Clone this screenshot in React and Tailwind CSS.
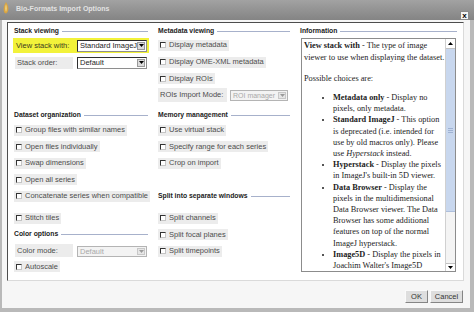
import React from 'react'

const Heading = ({ children, className = '' }) => (
  <div className={`flex items-center gap-[3px] h-[10px] ${className}`}>
    <span className="text-[6.8px] font-bold text-[#222] whitespace-nowrap leading-none">{children}</span>
    <span className="flex-1 h-px bg-[#a7b1cb]" />
  </div>
)

const Check = ({ label, className = '' }) => (
  <div className={`flex items-center self-start h-[11px] bg-[#ececec] pl-[2px] pr-[2px] gap-[3px] ${className}`}>
    <span className="w-[6px] h-[6px] bg-white border border-t-[#333] border-l-[#333] border-r-[#c4c4c4] border-b-[#c4c4c4]" />
    <span className="text-[7.5px] text-[#4d4d4d] leading-none whitespace-nowrap">{label}</span>
  </div>
)

const Select = ({ value, disabled, className = '', textSize = 'text-[7.5px]' }) => (
  <div
    className={`flex items-stretch border ${
      disabled
        ? 'border-[#b4b4b4] bg-[#f3f3f3]'
        : 'border-t-[#2e2e2e] border-l-[#2e2e2e] border-r-[#8e8e8e] border-b-[#8e8e8e] bg-white'
    } ${className}`}
  >
    <span className={`flex-1 flex items-center pl-[2px] ${textSize} leading-none whitespace-nowrap overflow-hidden ${disabled ? 'text-[#a9a9a9]' : 'text-[#1e1e1e]'}`}>
      {value}
    </span>
    <span
      className={`w-[8px] my-[1px] mr-[1px] flex items-center justify-center border ${
        disabled ? 'border-[#c8c8c8] bg-[#e6e6e6]' : 'border-[#9a9a9a] bg-[#dcdcdc]'
      }`}
    >
      <svg width="5" height="3" viewBox="0 0 5 3">
        <path d="M0 0h5L2.5 3z" fill={disabled ? '#9a9a9a' : '#000'} />
      </svg>
    </span>
  </div>
)

const Label = ({ children, className = '' }) => (
  <div className={`flex items-center bg-[#ececec] pl-[2px] text-[7.5px] text-[#4d4d4d] leading-none whitespace-nowrap ${className}`}>
    {children}
  </div>
)

const Button = ({ children, className = '' }) => (
  <button className={`h-[13px] flex items-center justify-center bg-[#dedede] border border-t-[#fafafa] border-l-[#fafafa] border-r-[#858585] border-b-[#858585] text-[7.5px] leading-none text-[#333] ${className}`}>
    {children}
  </button>
)

export default function App() {
  return (
    <div className="w-[474px] h-[312px] flex flex-col overflow-hidden bg-[#a9a9a9] font-['Liberation_Sans',Arial,sans-serif]">
      {/* title bar */}
      <div className="h-[20px] flex items-start bg-gradient-to-b from-[#a2a2a2] to-[#848484] pl-[3px] pr-[5px]">
        <svg width="6" height="13" viewBox="0 0 6 13" className="mt-[2px]">
          <path d="M3 0C5 3 6 6 5 9 4 12 2 12 1 10 0 7 1 3 3 0z" fill="#d9a441" />
          <path d="M3 2C4 5 4 8 3 10 2 8 2 5 3 2z" fill="#f3d98a" />
        </svg>
        <span className="ml-[7px] mt-[5px] text-[7px] font-bold text-[#e2e2e2] leading-none">Bio-Formats Import Options</span>
        <span className="ml-auto self-end w-[9px] h-[9px] bg-[#f4f4f4] border border-[#8a8a8a] flex items-center justify-center text-[8px] font-bold leading-none text-black">
          x
        </span>
      </div>

      {/* window body */}
      <div className="flex-1 flex flex-col bg-[#f6f6f6] border-l-2 border-r-4 border-b-4 border-[#b9b9b9] pt-[2px] pl-[5px] pr-[6px]">
        <div className="h-[259px] flex bg-white border border-t-[#4d4d4d] border-l-[#4d4d4d] border-r-[#dadada] border-b-[#dadada] pl-[6px] pr-[4px] gap-[10px]">
          {/* column 1 */}
          <div className="w-[134px] flex flex-col">
            <Heading className="mt-[3.5px]">Stack viewing</Heading>
            <div className="mt-[1.5px] h-[15px] -ml-[1px] w-[136px] flex items-center bg-[#f2f23a] pl-[3px] pr-[2px]">
              <span className="text-[7.5px] text-[#3a3a20] leading-none whitespace-nowrap">View stack with:</span>
              <Select value="Standard ImageJ" className="ml-auto w-[70px] h-[12px]" />
            </div>
            <div className="mt-[3.5px] h-[12px] flex gap-[4px]">
              <Label className="w-[58px] ml-[1px]">Stack order:</Label>
              <Select value="Default" className="w-[70px]" />
            </div>

            <Heading className="mt-[42px]">Dataset organization</Heading>
            <Check label="Group files with similar names" className="mt-[4px]" />
            <Check label="Open files individually" className="mt-[5.5px]" />
            <Check label="Swap dimensions" className="mt-[5.5px]" />
            <Check label="Open all series" className="mt-[5.5px]" />
            <Check label="Concatenate series when compatible" className="mt-[5.5px]" />
            <Check label="Stitch tiles" className="mt-[11px]" />

            <Heading className="mt-[6px]">Color options</Heading>
            <div className="mt-[4.5px] h-[13px] flex gap-[4px]">
              <Label className="w-[58px] ml-[1px]">Color mode:</Label>
              <Select value="Default" disabled className="w-[70px] mt-[2px]" />
            </div>
            <Check label="Autoscale" className="mt-[4px]" />
          </div>

          {/* column 2 */}
          <div className="w-[132px] flex flex-col">
            <Heading className="mt-[3.5px]">Metadata viewing</Heading>
            <Check label="Display metadata" className="mt-[3px]" />
            <Check label="Display OME-XML metadata" className="mt-[6px]" />
            <Check label="Display ROIs" className="mt-[5.5px]" />
            <div className="mt-[4px] h-[14px] flex items-center gap-[3px]">
              <Label className="w-[69px] h-full">ROIs Import Mode:</Label>
              <Select value="ROI manager" disabled textSize="text-[7px]" className="w-[58px] h-[11px]" />
            </div>

            <Heading className="mt-[8.5px]">Memory management</Heading>
            <Check label="Use virtual stack" className="mt-[4px]" />
            <Check label="Specify range for each series" className="mt-[5.5px]" />
            <Check label="Crop on import" className="mt-[5.5px]" />

            <Heading className="mt-[22.5px]">Split into separate windows</Heading>
            <Check label="Split channels" className="mt-[11.5px]" />
            <Check label="Split focal planes" className="mt-[5.5px]" />
            <Check label="Split timepoints" className="mt-[5.5px]" />
          </div>

          {/* column 3 */}
          <div className="w-[159px] flex flex-col">
            <Heading className="mt-[3.5px] pr-[2px]">Information</Heading>
            <div className="mt-[1.5px] mb-[8px] ml-[1px] mr-[3px] flex-1 flex border border-[#8c8c8c] bg-white overflow-hidden">
              <div className="flex-1 overflow-hidden pl-[2px] pt-[1.4px] font-['Liberation_Serif','Times_New_Roman',serif] text-[8.3px] leading-[11.2px] text-[#1c1c1c] whitespace-nowrap">
                <p>
                  <b>View stack with</b> - The type of image
                  <br />
                  viewer to use when displaying the dataset.
                </p>
                <p className="mt-[10.6px]">Possible choices are:</p>
                <ul className="mt-[7.3px] list-disc pl-[29px]">
                  <li>
                    <b>Metadata only</b> - Display no
                    <br />
                    pixels, only metadata.
                  </li>
                  <li>
                    <b>Standard ImageJ</b> - This option
                    <br />
                    is deprecated (i.e. intended for
                    <br />
                    use by old macros only). Please
                    <br />
                    use <i>Hyperstack</i> instead.
                  </li>
                  <li>
                    <b>Hyperstack</b> - Display the pixels
                    <br />
                    in ImageJ's built-in 5D viewer.
                  </li>
                  <li>
                    <b>Data Browser</b> - Display the
                    <br />
                    pixels in the multidimensional
                    <br />
                    Data Browser viewer. The Data
                    <br />
                    Browser has some additional
                    <br />
                    features on top of the normal
                    <br />
                    ImageJ hyperstack.
                  </li>
                  <li>
                    <b>Image5D</b> - Display the pixels in
                    <br />
                    Joachim Walter's Image5D
                  </li>
                </ul>
              </div>
              {/* scrollbar */}
              <div className="w-[10px] flex flex-col bg-[#f4f4f4] border-l border-[#d0d0d0]">
                <div className="h-[10px] flex items-center justify-center bg-white border-b border-[#c2c2c2]">
                  <svg width="5" height="3" viewBox="0 0 5 3">
                    <path d="M0 3h5L2.5 0z" fill="#000" />
                  </svg>
                </div>
                <div className="h-[163px] flex flex-col items-center justify-center gap-[1px] bg-[#c8d7ee] border-b border-[#aebfdc]">
                  <span className="w-[5px] h-px bg-[#9fb2d3]" />
                  <span className="w-[5px] h-px bg-[#9fb2d3]" />
                  <span className="w-[5px] h-px bg-[#9fb2d3]" />
                </div>
                <div className="flex-1" />
                <div className="h-[8px] flex items-center justify-center bg-white border-t border-[#c2c2c2]">
                  <svg width="5" height="3" viewBox="0 0 5 3">
                    <path d="M0 0h5L2.5 3z" fill="#000" />
                  </svg>
                </div>
              </div>
            </div>
          </div>
        </div>

        {/* buttons */}
        <div className="mt-[9px] mr-[1px] flex justify-end gap-[2px]">
          <Button className="w-[23px]">OK</Button>
          <Button className="w-[33px]">Cancel</Button>
        </div>
      </div>
    </div>
  )
}
